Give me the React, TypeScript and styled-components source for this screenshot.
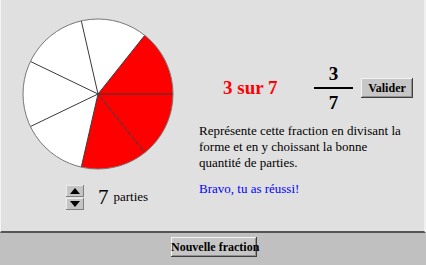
import React from 'react';
import styled, { createGlobalStyle } from 'styled-components';

const GlobalStyle = createGlobalStyle`
  html, body {
    margin: 0;
    padding: 0;
    background: #c0c0c0;
  }
  body {
    font-family: "Liberation Serif", "Times New Roman", serif;
    color: #000;
  }
`;

const PARTS = 7;
const FILLED = 3;
const R = 75;
const C = 76;

const Page = styled.div`
  width: 426px;
  height: 265px;
  display: flex;
  flex-direction: column;
  overflow: hidden;
`;

const Panel = styled.div`
  height: 233px;
  box-sizing: border-box;
  background: #e0e0e0;
  border-left: 1px solid #f4f4f4;
  border-right: 2px solid #f0f0f0;
  border-bottom: 2px solid #555;
  display: flex;
`;

const LeftCol = styled.div`
  width: 197px;
  display: flex;
  flex-direction: column;
  padding: 18px 0 0 21px;
  box-sizing: border-box;
`;

const PieBox = styled.svg`
  display: block;
  width: 152px;
  height: 152px;
`;

const Counter = styled.div`
  display: flex;
  align-items: center;
  margin: 15px 0 0 44px;
`;

const Spinner = styled.div`
  display: flex;
  flex-direction: column;
  gap: 1px;
`;

const SpinButton = styled.button`
  width: 18px;
  height: 12px;
  padding: 0;
  border: none;
  background: #c4c4c4;
  box-shadow: inset -1px -1px 0 #808080, inset 1px 1px 0 #ececec;
  display: flex;
  align-items: center;
  justify-content: center;
`;

const Count = styled.span`
  font-size: 21px;
  margin: 0 5px 0 14px;
`;

const Unit = styled.span`
  font-size: 13px;
  position: relative;
  top: -1px;
`;

const RightCol = styled.div`
  flex: 1;
  display: flex;
  flex-direction: column;
  padding: 61px 0 0 1px;
`;

const TopRow = styled.div`
  display: flex;
  align-items: center;
  height: 54px;
`;

const Label = styled.span`
  color: #ff0000;
  font-weight: bold;
  font-size: 19px;
  margin-left: 24px;
  width: 91px;
`;

const Fraction = styled.div`
  display: flex;
  flex-direction: column;
  align-items: center;
  width: 39px;
  font-weight: bold;
  font-size: 19px;
  line-height: 22px;
`;

const Bar = styled.div`
  width: 39px;
  height: 2px;
  background: #000;
  margin: 2px 0 3px;
`;

const Button = styled.button<{ $w: number }>`
  width: ${(p) => p.$w}px;
  height: 20px;
  padding: 0;
  background: #c6c6c6;
  border: none;
  box-shadow: inset -1px -1px 0 #404040, inset 1px 1px 0 #f4f4f4, inset -2px -2px 0 #909090;
  font-family: "Liberation Serif", "Times New Roman", serif;
  font-weight: bold;
  font-size: 12px;
  white-space: nowrap;
  color: #000;
`;

const Gap = styled.div`
  width: 8px;
`;

const Text = styled.p`
  margin: 8px 0 0 0;
  width: 208px;
  font-size: 13px;
  line-height: 16px;
`;

const Success = styled.p`
  margin: 10px 0 0 0;
  font-size: 13px;
  color: #0000ff;
`;

const Footer = styled.div`
  flex: 1;
  background: #c0c0c0;
  display: flex;
  justify-content: center;
  padding: 4px 0 0 2px;
  box-sizing: border-box;
`;

function point(i: number) {
  const a = ((i - 1) * 2 * Math.PI) / PARTS;
  return [C + R * Math.cos(a), C + R * Math.sin(a)];
}

const Pie: React.FC = () => {
  const slices = Array.from({ length: PARTS }, (_, i) => {
    const [x1, y1] = point(i);
    const [x2, y2] = point(i + 1);
    return { d: `M${C},${C} L${x1},${y1} A${R},${R} 0 0 1 ${x2},${y2} Z`, red: i < FILLED };
  });
  return (
    <PieBox viewBox="0 0 152 152">
      {slices.map((s, i) => (
        <path key={i} d={s.d} fill={s.red ? '#ff0000' : '#ffffff'} stroke="none" />
      ))}
      {slices.map((_, i) => {
        const [x, y] = point(i);
        return <line key={i} x1={C} y1={C} x2={x} y2={y} stroke="#3a3a3a" strokeWidth={1} />;
      })}
      <circle cx={C} cy={C} r={R} fill="none" stroke="#777" strokeWidth={1} />
    </PieBox>
  );
};

const Arrow: React.FC<{ up?: boolean }> = ({ up }) => (
  <svg width="10" height="6" viewBox="0 0 10 6">
    <path d={up ? 'M0,6 L5,0 L10,6 Z' : 'M0,0 L10,0 L5,6 Z'} fill="#000" />
  </svg>
);

export default function App() {
  return (
    <Page>
      <GlobalStyle />
      <Panel>
        <LeftCol>
          <Pie />
          <Counter>
            <Spinner>
              <SpinButton><Arrow up /></SpinButton>
              <SpinButton><Arrow /></SpinButton>
            </Spinner>
            <Count>{PARTS}</Count>
            <Unit>parties</Unit>
          </Counter>
        </LeftCol>
        <RightCol>
          <TopRow>
            <Label>3 sur 7</Label>
            <Fraction>
              <span>3</span>
              <Bar />
              <span>7</span>
            </Fraction>
            <Gap />
            <Button $w={52}>Valider</Button>
          </TopRow>
          <Text>
            Représente cette fraction en divisant la forme et en y choissant la bonne quantité de parties.
          </Text>
          <Success>Bravo, tu as réussi!</Success>
        </RightCol>
      </Panel>
      <Footer>
        <Button $w={86}>Nouvelle fraction</Button>
      </Footer>
    </Page>
  );
}
